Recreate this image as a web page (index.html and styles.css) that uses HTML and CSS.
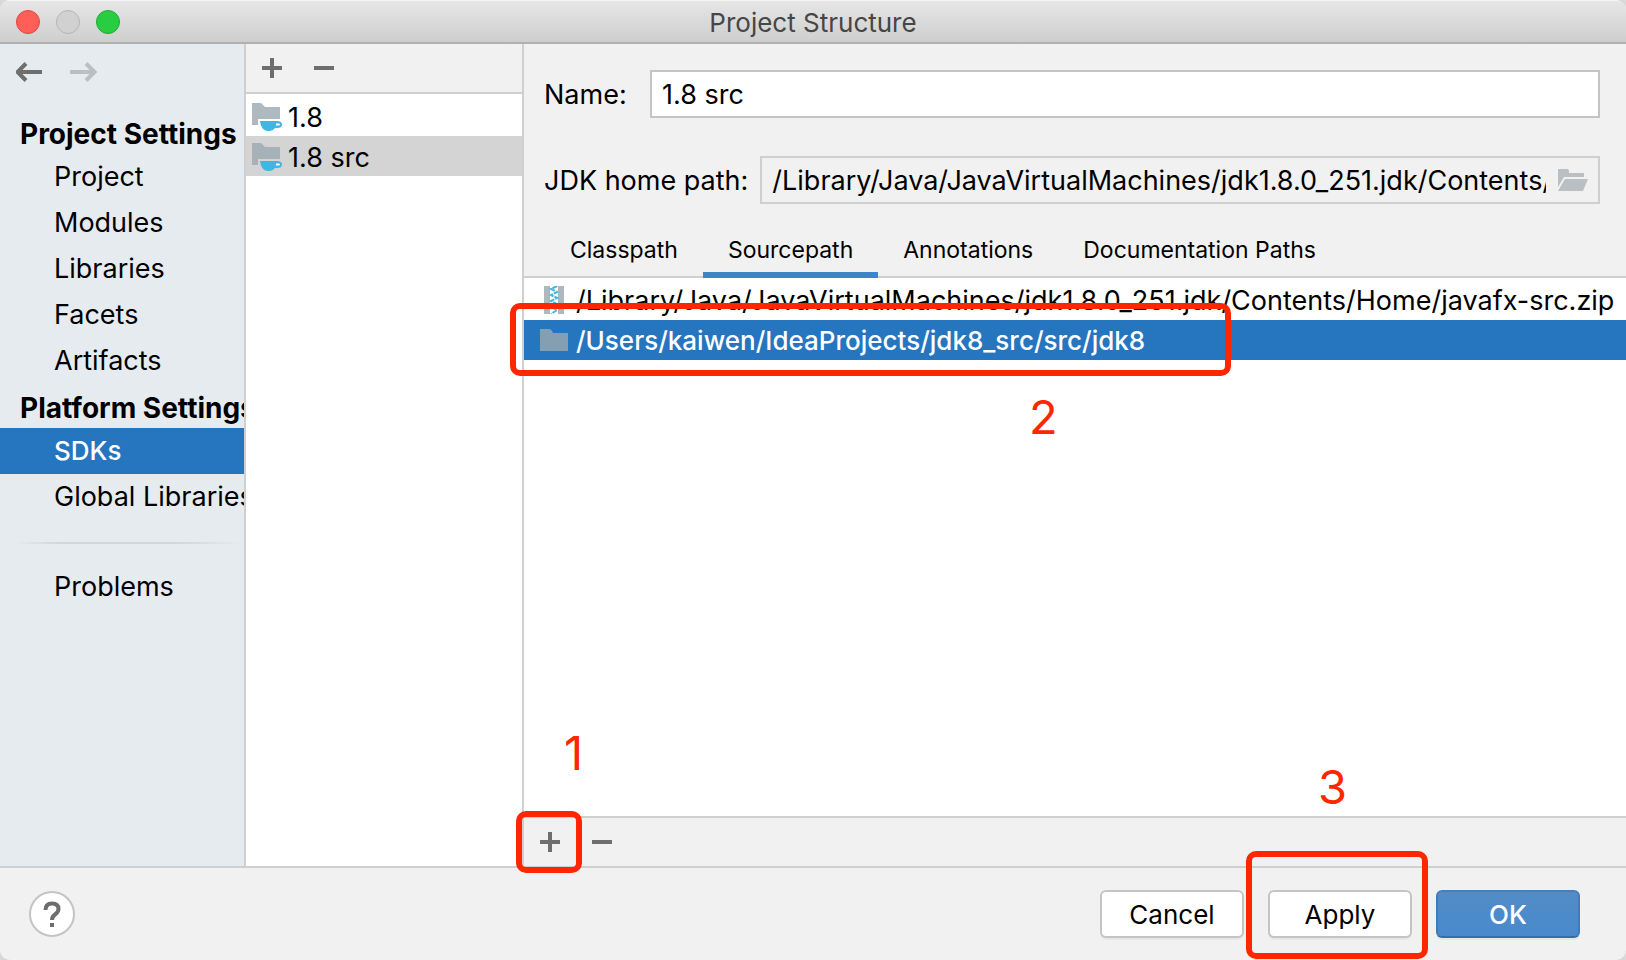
FILE: index.html
```html
<!DOCTYPE html>
<html lang="en">
<head>
    <meta charset="UTF-8">
    <meta name="viewport" content="width=device-width, initial-scale=1.0">
    <title>Project Structure</title>
    <link rel="stylesheet" href="styles.css">
</head>
<body>
    <!-- Shared icons -->
    <svg class="sprite" aria-hidden="true">
        <symbol id="icon-plus" viewBox="0 0 20 20">
            <path d="M8 0h4v8h8v4h-8v8H8v-8H0V8h8z" fill="#6e6e6e"/>
        </symbol>
        <symbol id="icon-minus" viewBox="0 0 20 20">
            <path d="M0 8h20v4H0z" fill="#6e6e6e"/>
        </symbol>
        <symbol id="icon-sdk" viewBox="0 0 30 30">
            <path d="M0 1h8q2 0 3 2l2 2h15v12H6v6H0z" fill="#9aa7b0" fill-opacity=".8"/>
            <path d="M8 19h17q5 0 5 3.500t-5 3.500h-2q-2 3-5 3h-3q-6-1-7-10z" fill="#40b6e0"/>
            <path d="M24 21.500h2.500q1.500 0 1.500 1t-1.500 1H24z" fill="#fff"/>
        </symbol>
    </svg>

    <div class="window">
        <header class="titlebar">
            <div class="lights">
                <button class="light light-close" aria-label="Close"></button>
                <button class="light light-minimize" aria-label="Minimize"></button>
                <button class="light light-zoom" aria-label="Zoom"></button>
            </div>
            <h1 class="title">Project Structure</h1>
        </header>

        <div class="content">
            <nav class="sidebar">
                <div class="history">
                    <button class="icon-button" aria-label="Back">
                        <svg width="28" height="20" viewBox="0 0 28 20"><path d="M26 10H2M10 1.500L1.500 10l8.500 8.500" fill="none" stroke="#6e6e6e" stroke-width="4"/></svg>
                    </button>
                    <button class="icon-button" aria-label="Forward" disabled>
                        <svg width="28" height="20" viewBox="0 0 28 20"><path d="M0 10h24M16 1.500l8.500 8.500-8.500 8.500" fill="none" stroke="#bcbebf" stroke-width="4"/></svg>
                    </button>
                </div>
                <h2 class="group">Project Settings</h2>
                <a href="#" class="item">Project</a>
                <a href="#" class="item">Modules</a>
                <a href="#" class="item">Libraries</a>
                <a href="#" class="item">Facets</a>
                <a href="#" class="item">Artifacts</a>
                <h2 class="group">Platform Settings</h2>
                <a href="#" class="item item-active">SDKs</a>
                <a href="#" class="item">Global Libraries</a>
                <hr class="divider">
                <a href="#" class="item">Problems</a>
            </nav>

            <section class="sdk-panel">
                <div class="toolbar">
                    <button class="icon-button" aria-label="Add SDK"><svg width="20" height="20"><use href="#icon-plus"/></svg></button>
                    <button class="icon-button" aria-label="Remove SDK"><svg width="20" height="20"><use href="#icon-minus"/></svg></button>
                </div>
                <ul class="sdk-list">
                    <li class="sdk"><svg width="30" height="30"><use href="#icon-sdk"/></svg>1.8</li>
                    <li class="sdk sdk-active"><svg width="30" height="30"><use href="#icon-sdk"/></svg>1.8 src</li>
                </ul>
            </section>

            <main class="editor">
                <div class="form">
                    <div class="field">
                        <label for="name" class="label-name">Name:</label>
                        <div class="box box-white">
                            <input type="text" id="name" value="1.8 src">
                        </div>
                    </div>
                    <div class="field">
                        <label for="home">JDK home path:</label>
                        <div class="box">
                            <input type="text" id="home" value="/Library/Java/JavaVirtualMachines/jdk1.8.0_251.jdk/Contents/Home" readonly>
                            <button class="icon-button" aria-label="Browse">
                                <svg width="30" height="22" viewBox="0 0 30 22"><path d="M0 0h9q2 0 2 2v2h15v4H6L0 18z" fill="#b9bfc3"/><path d="M7 10h23l-5 12H0z" fill="#b9bfc3"/></svg>
                            </button>
                        </div>
                    </div>
                </div>

                <div class="tabs" role="tablist">
                    <button class="tab" role="tab">Classpath</button>
                    <button class="tab tab-active" role="tab" aria-selected="true">Sourcepath</button>
                    <button class="tab" role="tab">Annotations</button>
                    <button class="tab" role="tab">Documentation Paths</button>
                </div>

                <ul class="paths">
                    <li class="path">
                        <svg width="28" height="28" viewBox="0 0 28 28">
                            <path d="M4 0h6v28H4zM18 0h6v28h-6z" fill="#aeb8bf"/>
                            <path d="M17 0l-6 3 6 3-6 3 6 3-6 3 6 3-6 3 6 3-6 4" fill="none" stroke="#40b6e0" stroke-width="2" stroke-dasharray="5 1"/>
                        </svg>
                        /Library/Java/JavaVirtualMachines/jdk1.8.0_251.jdk/Contents/Home/javafx-src.zip
                    </li>
                    <li class="path path-active">
                        <svg width="28" height="22" viewBox="0 0 28 22"><path d="M0 0h9q2 0 3 2l1 2h15v18H0z" fill="#849eb4"/></svg>
                        /Users/kaiwen/IdeaProjects/jdk8_src/src/jdk8
                        <span class="mark mark-path"></span>
                        <span class="step step-path">2</span>
                    </li>
                </ul>

                <div class="toolbar toolbar-bottom">
                    <div class="anchor">
                        <button class="icon-button" aria-label="Add path"><svg width="20" height="20"><use href="#icon-plus"/></svg></button>
                        <span class="mark mark-add"></span>
                        <span class="step step-add">1</span>
                    </div>
                    <button class="icon-button" aria-label="Remove path"><svg width="20" height="20"><use href="#icon-minus"/></svg></button>
                </div>
            </main>
        </div>

        <footer class="footer">
            <button class="help" aria-label="Help">
                <svg width="18" height="26" viewBox="0 0 18 26"><path d="M2.500 9q0-6.500 6.500-6.500T15.500 8q0 3-3.500 5.500-3 2-3 5.500M9 22v4" fill="none" stroke="#6e6e6e" stroke-width="4"/></svg>
            </button>
            <div class="actions">
                <button class="button">Cancel</button>
                <div class="anchor">
                    <button class="button">Apply</button>
                    <span class="mark mark-apply"></span>
                    <span class="step step-apply">3</span>
                </div>
                <button class="button button-primary">OK</button>
            </div>
        </footer>
    </div>
</body>
</html>
```
FILE: styles.css
```css
* {
    box-sizing: border-box;
}

body {
    margin: 0;
    background: #d8d8d8;
    color: #000;
    font-family: Inter, "Liberation Sans", sans-serif;
    font-size: 27px;
}

button, input {
    font: inherit;
    color: inherit;
}

ul {
    list-style: none;
    margin: 0;
    padding: 0;
}

.sprite {
    position: absolute;
    width: 0;
    height: 0;
}

.window {
    display: flex;
    flex-direction: column;
    min-height: 100vh;
    background: #f1f1f1;
    border-radius: 10px;
    overflow: hidden;
}

/* Title bar */
.titlebar {
    display: grid;
    grid-template-columns: 1fr auto 1fr;
    align-items: center;
    height: 44px;
    padding: 0 16px;
    background: linear-gradient(#e6e6e6, #cecece);
    border-top: 1px solid #f4f4f4;
    border-bottom: 2px solid #b0b0b0;
}

.lights {
    display: flex;
    gap: 16px;
}

.light {
    width: 24px;
    height: 24px;
    padding: 0;
    border: 1px solid #b5b5b5;
    border-radius: 50%;
    background: #d1d1d1;
}

.light-close {
    background: #ff5f57;
    border-color: #e14640;
}

.light-zoom {
    background: #28cd41;
    border-color: #1eab30;
}

.title {
    margin: 0;
    padding-top: 2px;
    font-size: 26px;
    font-weight: 400;
    line-height: 30px;
    color: #464646;
}

.content {
    display: flex;
    flex: 1;
}

.icon-button {
    display: flex;
    padding: 0;
    border: none;
    background: none;
}

/* Sidebar */
.sidebar {
    width: 246px;
    flex-shrink: 0;
    overflow: hidden;
    white-space: nowrap;
    background: #e6ebf0;
    border-right: 2px solid #cfcfcf;
}

.history {
    display: flex;
    gap: 26px;
    padding: 18px 16px 28px;
}

.group {
    height: 44px;
    margin: 0;
    padding-left: 20px;
    font-size: 28px;
    line-height: 48px;
}

.item {
    display: block;
    padding-left: 54px;
    line-height: 46px;
    color: inherit;
    text-decoration: none;
}

.item-active {
    background: #2675bf;
    color: #fff;
    font-size: 26px;
    font-weight: 500;
}

.divider {
    height: 2px;
    margin: 22px 0 20px 14px;
    border: none;
    background: linear-gradient(90deg, transparent, #d3d5d7 20%, #d3d5d7 70%, transparent);
}

/* SDK list */
.sdk-panel {
    width: 278px;
    flex-shrink: 0;
    background: #fff;
    border-right: 2px solid #cfcfcf;
}

.toolbar {
    display: flex;
    align-items: center;
    gap: 32px;
    height: 50px;
    padding: 0 16px;
    background: #f1f1f1;
    border-bottom: 2px solid #cfcfcf;
}

.sdk-list {
    padding-top: 2px;
}

.sdk {
    display: flex;
    align-items: center;
    gap: 6px;
    height: 40px;
    padding: 2px 0 0 6px;
}

.sdk-active {
    background: #d4d4d4;
}

/* Editor */
.editor {
    display: flex;
    flex: 1;
    flex-direction: column;
    min-width: 0;
}

.form {
    display: flex;
    flex-direction: column;
    gap: 38px;
    padding: 26px 26px 22px 20px;
}

.field {
    display: flex;
    align-items: center;
    gap: 12px;
    white-space: nowrap;
}

.label-name {
    width: 94px;
}

.box {
    display: flex;
    flex: 1;
    align-items: center;
    gap: 12px;
    height: 48px;
    padding: 0 10px;
    border: 2px solid #cfcfcf;
}

.box-white {
    background: #fff;
    border-color: #c4c4c4;
}

.box input {
    flex: 1;
    min-width: 0;
    padding: 0;
    border: none;
    outline: none;
    background: none;
}

.tabs {
    display: flex;
    padding-left: 21px;
    border-bottom: 2px solid #cfcfcf;
}

.tab {
    height: 52px;
    margin-bottom: -2px;
    padding: 2px 25px 0;
    border: none;
    border-bottom: 6px solid transparent;
    background: none;
    font-size: 23px;
}

.tab-active {
    border-bottom-color: #4083c9;
}

.paths {
    flex: 1;
    padding-top: 2px;
    background: #fff;
}

.path {
    position: relative;
    display: flex;
    align-items: center;
    gap: 8px;
    height: 40px;
    padding-left: 16px;
    white-space: nowrap;
}

.path-active {
    background: #2675bf;
    color: #fff;
    font-size: 26px;
    font-weight: 500;
}

.toolbar-bottom {
    height: 50px;
    border-top: 2px solid #cfcfcf;
    border-bottom: none;
}

/* Footer */
.footer {
    display: flex;
    justify-content: space-between;
    align-items: center;
    height: 94px;
    padding: 0 46px 0 29px;
    border-top: 2px solid #cfcfcf;
}

.help {
    display: flex;
    align-items: center;
    justify-content: center;
    width: 46px;
    height: 46px;
    padding: 0;
    border: 2px solid #c4c4c4;
    border-radius: 50%;
    background: #fff;
}

.actions {
    display: flex;
    gap: 24px;
}

.button {
    width: 144px;
    height: 48px;
    padding: 0;
    border: 2px solid #c4c4c4;
    border-radius: 6px;
    background: #fff;
    box-shadow: 0 2px 0 rgba(0, 0, 0, 0.04);
    font-size: 26px;
}

.button-primary {
    border-color: #4280bf #3f7cba #346eb0;
    background: linear-gradient(#528cc7, #4989cc);
    color: #fff;
    font-weight: 500;
}

/* Step marks laid over the controls */
.anchor {
    position: relative;
}

.mark {
    position: absolute;
    border: 6px solid #ff2600;
    border-radius: 10px;
    pointer-events: none;
}

.mark-path {
    top: -17px;
    bottom: -16px;
    left: -14px;
    width: 721px;
}

.mark-add {
    inset: -21px -22px -21px -24px;
}

.mark-apply {
    inset: -39px -16px -21px -22px;
}

.step {
    position: absolute;
    color: #ff2600;
    font-size: 47px;
    font-weight: 400;
    line-height: 48px;
}

.step-path {
    top: 73px;
    left: 505px;
}

.step-add {
    bottom: 75px;
    left: 24px;
}

.step-apply {
    bottom: 127px;
    left: 50px;
}
```
